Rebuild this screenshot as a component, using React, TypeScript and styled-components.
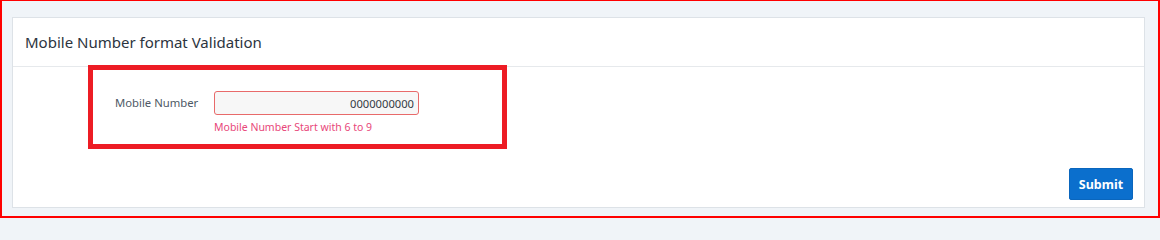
import React from "react";
import styled, { createGlobalStyle } from "styled-components";

const Global = createGlobalStyle`
  html, body { margin: 0; padding: 0; height: 218px; overflow: hidden; }
  body { background: #f0f4f8; font-family: "Noto Sans", "Open Sans", sans-serif; }
  * { box-sizing: border-box; }
`;

const Frame = styled.div`
  width: 1160px;
  height: 218px;
  border-style: solid;
  border-color: #ff0000;
  border-width: 1px 2px 2px 2px;
  padding: 16px 13px 9px 10px;
  background: #f0f4f8;
`;

const Card = styled.section`
  background: #ffffff;
  border: 1px solid #dde2e7;
  height: 191px;
  display: flex;
  flex-direction: column;
`;

const Header = styled.header`
  height: 49px;
  border-bottom: 1px solid #e6e9ec;
  display: flex;
  align-items: center;
  padding: 0 12px;
`;

const Title = styled.h2`
  margin: 0;
  font-size: 15px;
  font-weight: 400;
  color: #2c3440;
`;

const Body = styled.div`
  flex: 1;
  display: flex;
  flex-direction: column;
  padding: 0 11px 7px 75px;
`;

const Highlight = styled.div`
  margin-top: -2px;
  width: 419px;
  height: 84px;
  border: 5px solid #ed1c24;
  padding: 21px 0 0 22px;
`;

const Row = styled.div`
  display: flex;
  align-items: flex-start;
  gap: 16px;
`;

const Label = styled.label`
  font-size: 11.3px;
  color: #4e5965;
  line-height: 24px;
  width: 83px;
  white-space: nowrap;
`;

const Field = styled.div`
  display: flex;
  flex-direction: column;
  gap: 5px;
`;

const Input = styled.input<{ $invalid?: boolean }>`
  width: 205px;
  height: 24px;
  border: 1px solid ${(p) => (p.$invalid ? "#e86a6a" : "#ccd3da")};
  border-radius: 3px;
  background: #f7f7f7;
  text-align: right;
  padding: 0 4px;
  font-family: "Noto Sans", sans-serif;
  font-size: 11.2px;
  color: #333a44;
  outline: none;
`;

const ErrorText = styled.span`
  font-size: 10.5px;
  color: #e8477a;
  line-height: 14px;
`;

const Footer = styled.div`
  margin-top: auto;
  display: flex;
  justify-content: flex-end;
`;

const Button = styled.button`
  width: 64px;
  height: 32px;
  background: #0b6fcd;
  border: 1px solid #0a66bd;
  border-radius: 2px;
  color: #ffffff;
  font-family: "Noto Sans", sans-serif;
  font-weight: 700;
  font-size: 12.5px;
  cursor: pointer;
`;

export default function App() {
  return (
    <>
      <Global />
      <Frame>
        <Card>
          <Header>
            <Title>Mobile Number format Validation</Title>
          </Header>
          <Body>
            <Highlight>
              <Row>
                <Label htmlFor="mobile">Mobile Number</Label>
                <Field>
                  <Input id="mobile" $invalid defaultValue="0000000000" />
                  <ErrorText>Mobile Number Start with 6 to 9</ErrorText>
                </Field>
              </Row>
            </Highlight>
            <Footer>
              <Button>Submit</Button>
            </Footer>
          </Body>
        </Card>
      </Frame>
    </>
  );
}
